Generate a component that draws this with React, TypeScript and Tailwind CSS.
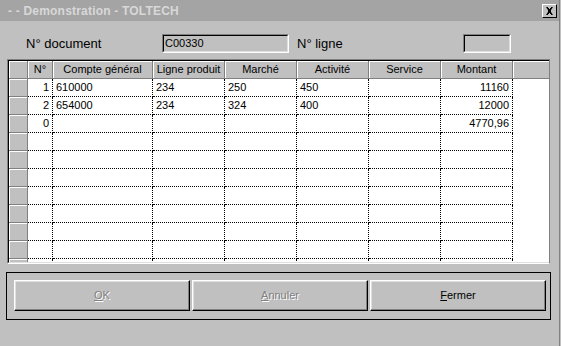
import React from "react";

const rows = [
  { n: "1", compte: "610000", ligne: "234", marche: "250", activite: "450", service: "", montant: "11160" },
  { n: "2", compte: "654000", ligne: "234", marche: "324", activite: "400", service: "", montant: "12000" },
  { n: "0", compte: "", ligne: "", marche: "", activite: "", service: "", montant: "4770,96" },
];

const headers = ["N°", "Compte général", "Ligne produit", "Marché", "Activité", "Service", "Montant"];

function Field({ value, width }: { value: string; width: string }) {
  return (
    <div className={`${width} h-[19px] border-t border-l border-[#808080] border-b-white border-r-white border-b border-r`}>
      <div className="h-full border-t border-l border-black border-b border-r border-b-[#dfdfdf] border-r-[#dfdfdf] flex items-center pl-[1px] text-[11px] leading-none">
        {value}
      </div>
    </div>
  );
}

function Btn({ label, disabled }: { label: string; disabled?: boolean }) {
  return (
    <div className="w-[176px] h-[31px] border-t border-l border-white border-b border-r border-b-black border-r-black">
      <div className="h-full flex items-center justify-center shadow-[inset_-1px_-1px_0_#808080,inset_1px_1px_0_#dfdfdf] text-[11px]">
        {disabled ? (
          <span className="text-[#808080] [text-shadow:1px_1px_0_#fff]">
            <span className="underline">{label[0]}</span>
            {label.slice(1)}
          </span>
        ) : (
          <span className="text-black">
            <span className="underline">{label[0]}</span>
            {label.slice(1)}
          </span>
        )}
      </div>
    </div>
  );
}

export default function App() {
  const allRows = [...rows, ...Array.from({ length: 8 }, () => null)];

  return (
    <div className="w-[561px] h-[346px] bg-[#c0c0c0] flex overflow-hidden font-['Liberation_Sans',Arial,sans-serif] text-black">
      <div className="w-[559px] flex flex-col">
        {/* title bar */}
        <div className="h-[21px] bg-[#a4a4a4] flex items-center justify-between">
          <span className="pl-[8px] text-[12px] font-bold text-[#d8d8d8] leading-none tracking-[0.2px]">- - Demonstration - TOLTECH</span>
          <div className="mr-[2px] w-[15px] h-[14px] bg-[#c0c0c0] border-t border-l border-white border-b border-r border-b-black border-r-black flex items-center justify-center">
            <svg width="9" height="8" viewBox="0 0 9 8">
              <path d="M1 0h2v1h1v1h1V1h1V0h2L6 3v2l2 3H6V7H5V6H4v1H3v1H1l2-3V3z" fill="#000" />
            </svg>
          </div>
        </div>

        {/* document line */}
        <div className="mt-[13px] h-[19px] flex items-center">
          <span className="ml-[26px] w-[136px] text-[13px] leading-none">N° document</span>
          <Field value="C00330" width="w-[127px]" />
          <span className="ml-[8px] w-[166px] text-[13px] leading-none">N° ligne</span>
          <Field value="" width="w-[48px]" />
        </div>

        {/* grid */}
        <div className="mt-[6px] ml-[7px] w-[543px] h-[205px] border-t border-l border-[#808080] border-b border-r border-b-white border-r-[#808080]">
          <div className="h-full border-t border-l border-black border-b border-b-[#dfdfdf] overflow-hidden bg-white">
            <div className="grid grid-cols-[19px_25px_100px_72px_72px_72px_72px_72px_36px] text-[11px] leading-none">
              <div className="h-[18px] bg-[#c0c0c0] border-r border-b border-[#808080] shadow-[inset_1px_1px_0_#fff]" />
              {headers.map((h) => (
                <div
                  key={h}
                  className="h-[18px] bg-[#c0c0c0] border-r border-b border-[#808080] shadow-[inset_1px_1px_0_#fff] flex items-center justify-center"
                >
                  {h}
                </div>
              ))}
              <div className="h-[18px] bg-[#c0c0c0] border-b border-[#808080] shadow-[inset_1px_1px_0_#fff]" />

              {allRows.map((r, i) => {
                const cells = r
                  ? [r.compte, r.ligne, r.marche, r.activite, r.service]
                  : ["", "", "", "", ""];
                return (
                  <React.Fragment key={i}>
                    <div className="h-[18px] bg-[#c0c0c0] border-r border-b border-[#808080] shadow-[inset_1px_1px_0_#fff]" />
                    <div className="h-[18px] border-r border-b border-dotted border-black flex items-center justify-end pr-[3px]">
                      {r ? r.n : ""}
                    </div>
                    {cells.map((c, j) => (
                      <div
                        key={j}
                        className="h-[18px] border-r border-b border-dotted border-black flex items-center pl-[3px]"
                      >
                        {c}
                      </div>
                    ))}
                    <div className="h-[18px] border-r border-b border-dotted border-black flex items-center justify-end pr-[3px]">
                      {r ? r.montant : ""}
                    </div>
                    <div className="h-[18px]" />
                  </React.Fragment>
                );
              })}
            </div>
          </div>
        </div>

        {/* buttons */}
        <div className="mt-[8px] ml-[6px] w-[545px] h-[48px] border border-black pt-[7px] pl-[7px] flex gap-[2px]">
          <Btn label="OK" disabled />
          <Btn label="Annuler" disabled />
          <Btn label="Fermer" />
        </div>
      </div>
      <div className="w-px bg-[#808080]" />
      <div className="w-px bg-[#c0c0c0]" />
    </div>
  );
}
